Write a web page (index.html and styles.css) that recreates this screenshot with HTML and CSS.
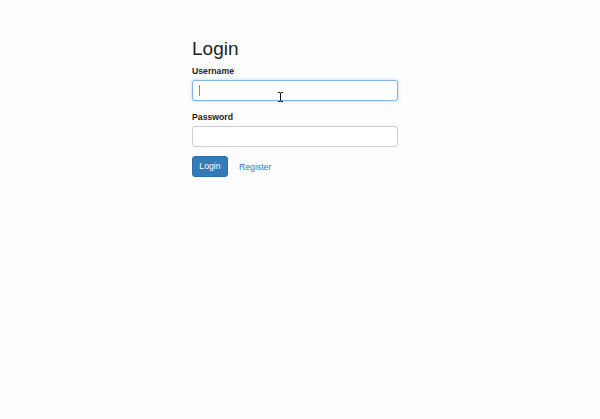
FILE: index.html
```html
<!DOCTYPE html>
<html lang="en">
<head>
<meta charset="utf-8">
<title>Login</title>
<link rel="stylesheet" href="styles.css">
</head>
<body>
<main class="page">
  <form class="login-form">
    <h1 class="title">Login</h1>
    <div class="field">
      <label class="label" for="username">Username</label>
      <div class="input-wrap">
        <input class="input input-focus" id="username" type="text">
        <span class="caret"></span>
        <svg class="ibeam" width="7" height="10" viewBox="0 0 7 10"><path d="M1 0.5h2l0.5 0.5 0.5-0.5h2M3.5 1v8M1 9.5h2l0.5-0.5 0.5 0.5h2" fill="none" stroke="#111" stroke-width="1"/></svg>
      </div>
    </div>
    <div class="field field-last">
      <label class="label" for="password">Password</label>
      <input class="input" id="password" type="password">
    </div>
    <div class="actions">
      <button class="btn" type="button">Login</button>
      <a class="link" href="#">Register</a>
    </div>
  </form>
</main>
</body>
</html>
```

FILE: styles.css
```css
html, body {
  margin: 0;
  padding: 0;
  background: #fdfcfe;
}
body {
  font-family: "Liberation Sans", Arial, sans-serif;
  color: #333;
}
.page {
  padding: 38px 0 0 192px;
}
.login-form {
  width: 206px;
  margin: 0;
}
.title {
  margin: 0 0 6px;
  font-size: 19px;
  line-height: 21px;
  font-weight: normal;
  color: #222;
}
.field {
  margin-bottom: 10px;
}
.field-last {
  margin-bottom: 9px;
}
.label {
  display: block;
  font-size: 8.7px;
  line-height: 12px;
  font-weight: bold;
  margin-bottom: 3px;
  color: #222;
}
.input-wrap {
  position: relative;
}
.input {
  display: block;
  box-sizing: border-box;
  width: 206px;
  height: 21px;
  margin: 0;
  padding: 0 6px;
  border: 1px solid #cfcfcf;
  border-radius: 3px;
  background: #fff;
  font: 8.5px "Liberation Sans", Arial, sans-serif;
  outline: none;
}
.input-focus {
  border-color: #7fb6e6;
  box-shadow: 0 0 3px rgba(102, 175, 233, 0.55);
}
.caret {
  position: absolute;
  left: 7px;
  top: 5px;
  width: 1px;
  height: 11px;
  background: #8a8a8a;
}
.ibeam {
  position: absolute;
  left: 85px;
  top: 12px;
}
.actions {
  display: flex;
  align-items: center;
  gap: 11px;
}
.btn {
  box-sizing: border-box;
  width: 36px;
  height: 21px;
  padding: 0;
  border: 1px solid #2e6da4;
  border-radius: 3px;
  background: #337ab7;
  color: #fff;
  font: 8.7px "Liberation Sans", Arial, sans-serif;
  line-height: 19px;
}
.link {
  color: #337ab7;
  font-size: 8.7px;
  text-decoration: none;
}
```
